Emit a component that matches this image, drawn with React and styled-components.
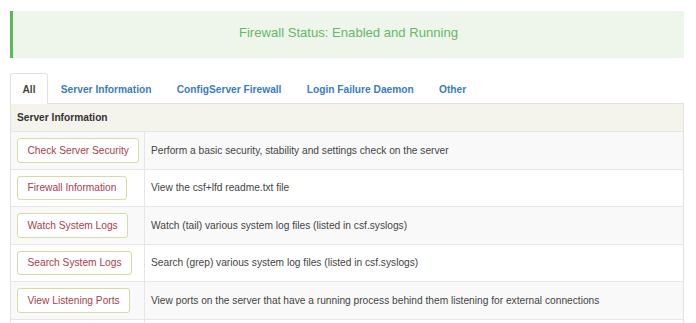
import React from "react";
import styled, { createGlobalStyle } from "styled-components";

const Global = createGlobalStyle`
  html, body { margin: 0; padding: 0; background: #fff; overflow: hidden; }
  body { font-family: "Liberation Sans", Arial, sans-serif; font-size: 10.2px; color: #333; }
  * { box-sizing: border-box; }
`;

const Page = styled.div`
  width: 674px;
  margin: 11px 0 0 10px;
`;

const Alert = styled.div`
  height: 47px;
  display: flex;
  align-items: center;
  justify-content: center;
  background: #eef6eb;
  border-left: 3px solid #5cb85c;
  color: #66b866;
  font-size: 13.1px;
  padding-bottom: 4px;
`;

const Tabs = styled.ul`
  list-style: none;
  margin: 15px 0 0;
  padding: 0;
  display: flex;
  border-bottom: 1px solid #e2e2e2;
  height: 31px;
`;

const Tab = styled.li`
  margin-right: 0.3px;
  margin-bottom: -1px;
  padding: 1px 11.5px 0;
  display: flex;
  align-items: center;
  font-weight: bold;
  font-size: 10.2px;
  color: ${(p) => (p.$active ? "#444" : "#3c7cbf")};
  background: ${(p) => (p.$active ? "#fff" : "transparent")};
  border: 1px solid ${(p) => (p.$active ? "#e2e2e2" : "transparent")};
  border-bottom-color: ${(p) => (p.$active ? "#fff" : "transparent")};
  border-radius: 3px 3px 0 0;
`;

const Table = styled.div`
  border-left: 1px solid #e2e2e2;
  border-right: 1px solid #e2e2e2;
`;

const HeaderRow = styled.div`
  height: 28px;
  display: flex;
  align-items: center;
  padding-left: 6px;
  background: #f4f4ec;
  font-weight: bold;
  color: #333;
  border-bottom: 1px solid #e6e6e6;
`;

const Row = styled.div`
  display: grid;
  grid-template-columns: 134px 1fr;
  min-height: 37.5px;
  background: ${(p) => (p.$striped ? "#f9f9f9" : "#fff")};
  border-bottom: 1px solid #e6e6e6;
`;

const ButtonCell = styled.div`
  padding: 6px;
  border-right: 1px solid #e6e6e6;
  display: flex;
  align-items: center;
`;

const DescCell = styled.div`
  padding: 0 6px;
  display: flex;
  align-items: center;
  color: #444;
`;

const ActionButton = styled.button`
  height: 24.5px;
  padding: 0 9.5px;
  background: #fff;
  border: 1px solid #d2dca8;
  border-radius: 3px;
  color: #a8404c;
  font-family: "Liberation Sans", Arial, sans-serif;
  font-size: 10.2px;
  white-space: nowrap;
  cursor: pointer;
`;

const rows = [
  ["Check Server Security", "Perform a basic security, stability and settings check on the server"],
  ["Firewall Information", "View the csf+lfd readme.txt file"],
  ["Watch System Logs", "Watch (tail) various system log files (listed in csf.syslogs)"],
  ["Search System Logs", "Search (grep) various system log files (listed in csf.syslogs)"],
  ["View Listening Ports", "View ports on the server that have a running process behind them listening for external connections"],
];

export default function App() {
  return (
    <>
      <Global />
      <Page>
        <Alert>Firewall Status: Enabled and Running</Alert>
        <Tabs>
          <Tab $active>All</Tab>
          <Tab>Server Information</Tab>
          <Tab>ConfigServer Firewall</Tab>
          <Tab>Login Failure Daemon</Tab>
          <Tab>Other</Tab>
        </Tabs>
        <Table>
          <HeaderRow>Server Information</HeaderRow>
          {rows.map(([b, d], i) => (
            <Row key={b} $striped={i % 2 === 0}>
              <ButtonCell>
                <ActionButton>{b}</ActionButton>
              </ButtonCell>
              <DescCell>{d}</DescCell>
            </Row>
          ))}
          <Row>
            <ButtonCell />
            <DescCell />
          </Row>
        </Table>
      </Page>
    </>
  );
}
